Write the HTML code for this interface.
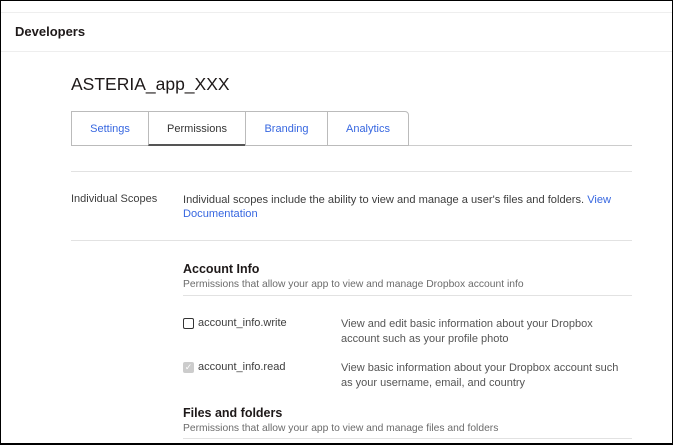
<html><head><style>
body{margin:0;width:673px;height:444px;overflow:hidden;background:#fff;font-family:"Liberation Sans",sans-serif;position:relative}
.a{position:absolute;white-space:nowrap}
.s{font-size:11px;color:#3d3d3d}
.g{font-size:10.3px;color:#6b6b6b}
.b{font-size:12.5px;font-weight:bold;color:#1e1919}
.l{position:absolute;height:1px;background:#e2e2e2}
.tab{position:absolute;top:111px;height:35px;border:1px solid #bbb;font-size:11px;color:#3767e0;text-align:center;line-height:34px;box-sizing:border-box;background:#fff}
</style></head><body>
<div style="position:absolute;left:0;top:0;width:671px;height:442px;border:1px solid #000;border-bottom:2px solid #000"></div>
<div class="l" style="left:1px;top:12px;width:671px;background:#eee"></div>
<div class="a b" style="left:15px;top:24px;font-size:13px">Developers</div>
<div class="l" style="left:1px;top:51px;width:671px;background:#eee"></div>
<div class="a" style="left:71px;top:74px;font-size:17.5px;color:#1e1919">ASTERIA_app_XXX</div>
<div class="l" style="left:71px;top:145px;width:561px;background:#ccc"></div>
<div class="tab" style="left:71px;width:78px">Settings</div>
<div class="tab" style="left:148px;width:98px;color:#333;border-bottom:2px solid #555">Permissions</div>
<div class="tab" style="left:245px;width:83px">Branding</div>
<div class="tab" style="left:327px;width:82px;border-radius:0 4px 0 0">Analytics</div>
<div class="l" style="left:71px;top:171px;width:561px"></div>
<div class="a s" style="left:71px;top:193px">Individual Scopes</div>
<div class="a s" style="left:183px;top:193px;line-height:14px;font-size:11.1px">Individual scopes include the ability to view and manage a user's files and folders. <span style="color:#3767e0">View</span><br><span style="color:#3767e0">Documentation</span></div>
<div class="l" style="left:71px;top:240px;width:561px"></div>
<div class="a b" style="left:183px;top:262px">Account Info</div>
<div class="a g" style="left:183px;top:279px">Permissions that allow your app to view and manage Dropbox account info</div>
<div class="l" style="left:183px;top:295px;width:449px"></div>
<div class="a" style="left:183px;top:318px;width:9px;height:9px;border:1px solid #333;border-radius:2px"></div>
<div class="a s" style="left:198px;top:317px">account_info.write</div>
<div class="a s" style="left:341px;top:317px;line-height:15px;color:#555">View and edit basic information about your Dropbox<br>account such as your profile photo</div>
<div class="a" style="left:183px;top:362px;width:11px;height:11px;background:#ccc;border-radius:2px;color:#fff;font-size:9px;line-height:11px;text-align:center">✓</div>
<div class="a s" style="left:198px;top:361px">account_info.read</div>
<div class="a s" style="left:341px;top:361px;line-height:15px;color:#555">View basic information about your Dropbox account such<br>as your username, email, and country</div>
<div class="a b" style="left:183px;top:406px">Files and folders</div>
<div class="a g" style="left:183px;top:423px">Permissions that allow your app to view and manage files and folders</div>
<div class="l" style="left:183px;top:438px;width:449px"></div>
</body></html>
